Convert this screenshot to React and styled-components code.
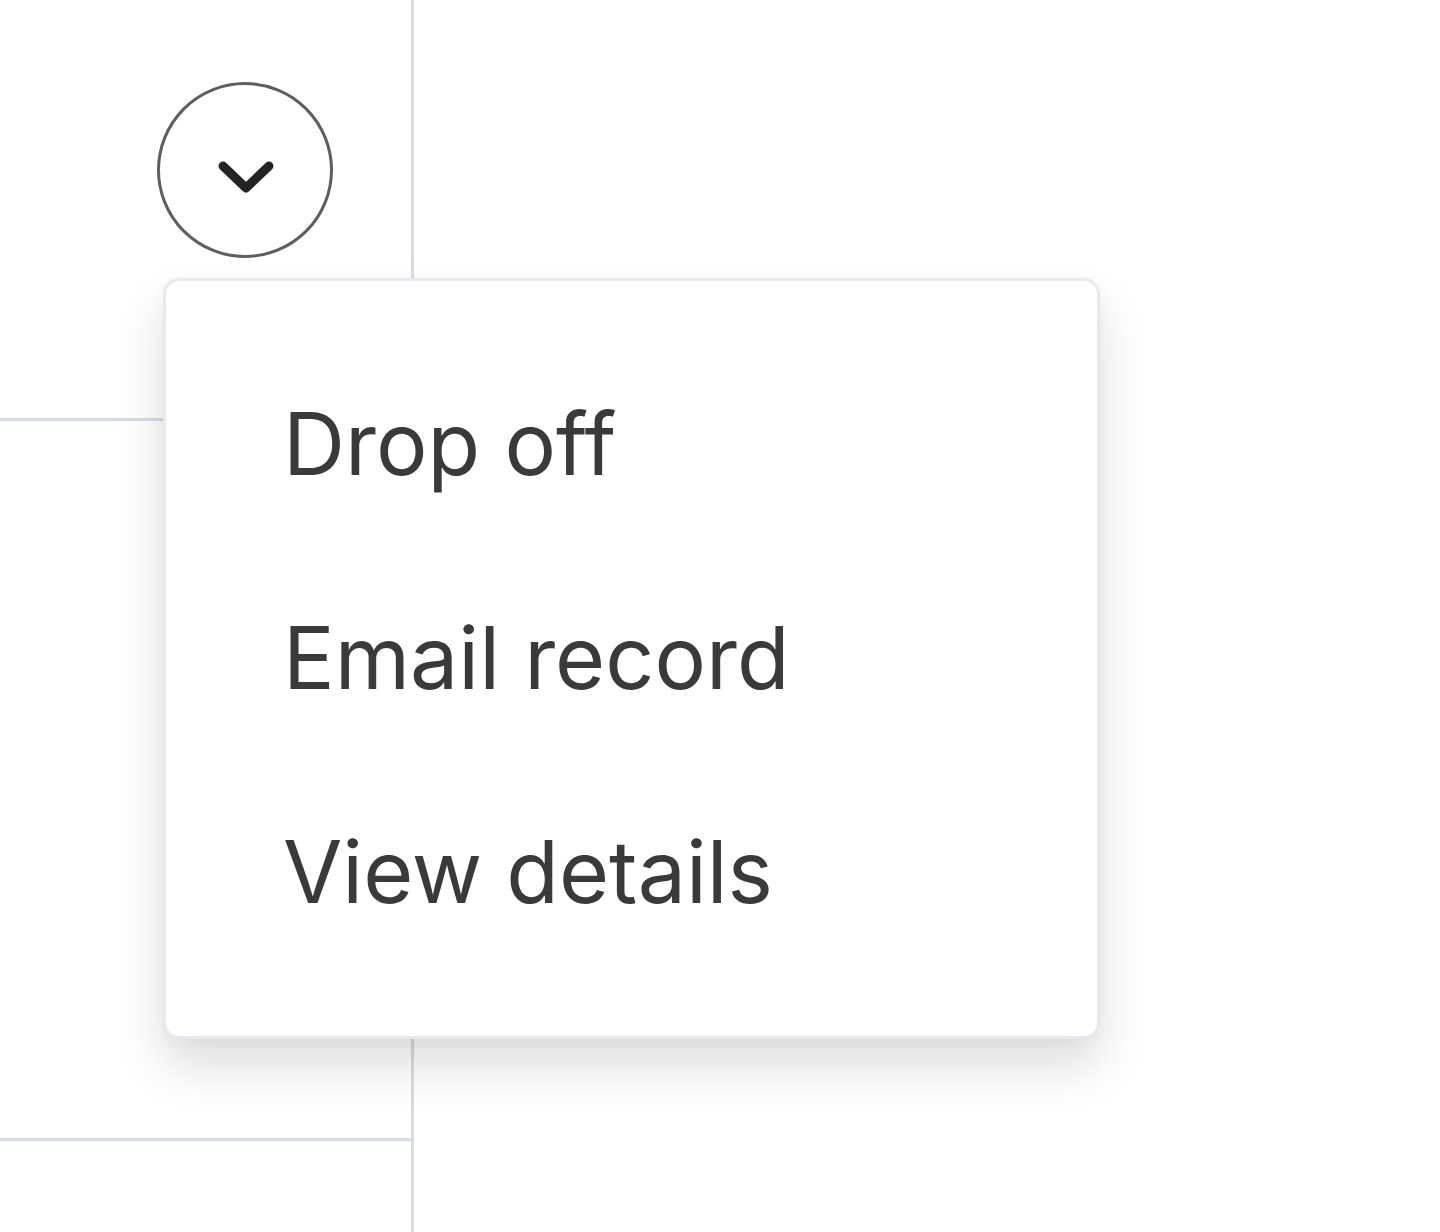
import React from 'react'
import styled, { createGlobalStyle } from 'styled-components'

const GlobalStyle = createGlobalStyle`
  html, body {
    margin: 0;
    padding: 0;
    background: #ffffff;
  }
  body {
    font-family: Inter, "Noto Sans", "Liberation Sans", sans-serif;
    color: #353535;
  }
`

const Page = styled.div`
  display: flex;
  width: 1440px;
  height: 1232px;
  overflow: hidden;
  background: #ffffff;
`
const LeftColumn = styled.div`
  display: flex;
  flex-direction: column;
  width: 411px;
  flex-shrink: 0;
  border-right: 3px solid #d7dce4;
`
const Cell = styled.div`
  position: relative;
  height: ${props => props.height}px;
  flex-shrink: 0;
  border-bottom: ${props => props.last ? 'none' : '3px solid #d7dce4'};
  box-sizing: border-box;
`
const ActionCell = styled(Cell)`
  padding: 82px 0 0 157px;
`
const CircleButton = styled.button`
  display: block;
  width: 176px;
  height: 176px;
  padding: 0;
  border: 3px solid #5e5e5e;
  border-radius: 50%;
  background: #ffffff;
  cursor: pointer;

  svg { display: block; }
`
const Menu = styled.ul`
  position: absolute;
  top: 278px;
  left: 163px;
  z-index: 10;
  width: 937px;
  height: 761px;
  margin: 0;
  padding: 56px 0 0 117px;
  box-sizing: border-box;
  list-style: none;
  background: #ffffff;
  border: 3px solid #e6e9ee;
  border-radius: 16px;
  box-shadow: 0 28px 50px rgba(0, 0, 0, 0.13), 0 4px 14px rgba(0, 0, 0, 0.04);
`
const MenuItem = styled.li`
  font-size: 86px;
  line-height: 214px;
  font-weight: 400;
  color: #3a3a3a;
  white-space: nowrap;
  cursor: pointer;
`

const Chevron = () => (
  <svg width='170' height='170' viewBox='0 0 170 170'>
    <path
      d='M63 81 L86 103 L109 81'
      fill='none'
      stroke='#232323'
      strokeWidth='9'
      strokeLinecap='round'
      strokeLinejoin='round'
    />
  </svg>
)

const items = ['Drop off', 'Email record', 'View details']

const App = () => (
  <>
    <GlobalStyle />
    <Page>
      <LeftColumn>
        <ActionCell height={421}>
          <CircleButton aria-label='More actions'>
            <Chevron />
          </CircleButton>
          <Menu>
            {items.map(item => (
              <MenuItem key={item}>{item}</MenuItem>
            ))}
          </Menu>
        </ActionCell>
        <Cell height={720} />
        <Cell height={91} last />
      </LeftColumn>
    </Page>
  </>
)

export default App
